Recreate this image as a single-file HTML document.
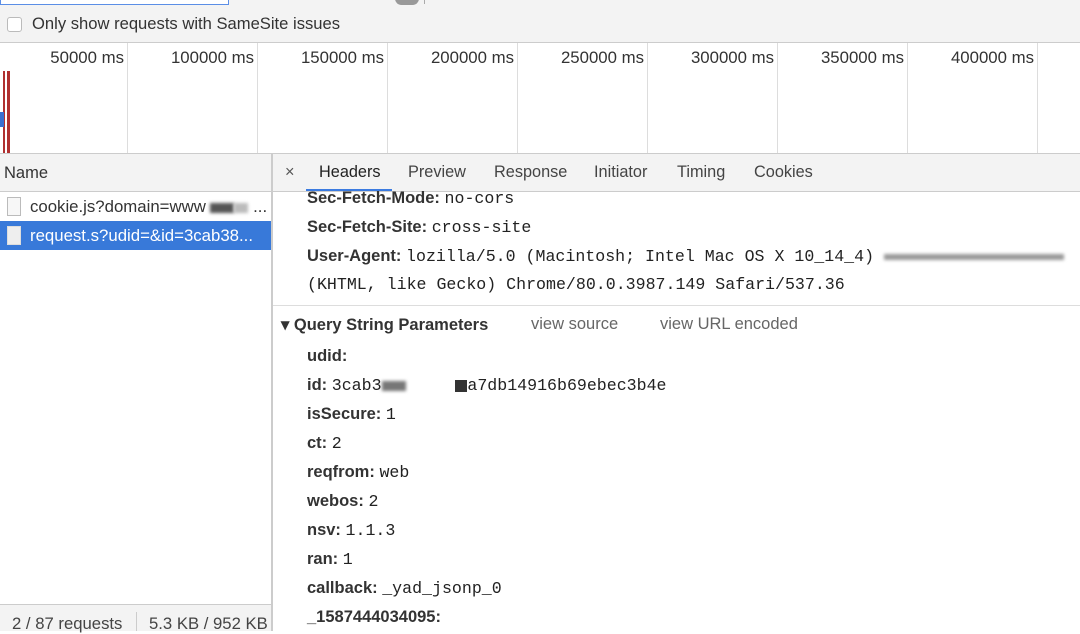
<!DOCTYPE html>
<html><head><meta charset="utf-8"><style>
*{margin:0;padding:0;box-sizing:border-box}
body{width:1080px;height:631px;overflow:hidden;position:relative;background:#fff;font-family:"Liberation Sans",sans-serif;color:#222}
.a{position:absolute}
.lbl{font-weight:bold;color:#333;font-size:16.5px}
.row{position:absolute;left:307px;font-size:16.5px;white-space:nowrap}
.row .v{font-family:"Liberation Mono",monospace;font-size:16.6px;color:#222}
.tick{position:absolute;top:48px;font-size:16.8px;color:#333;text-align:right;width:130px}
.vl{position:absolute;top:43px;width:1px;height:110px;background:#ddd}
.tab{position:absolute;top:163px;font-size:16.3px;color:#444}
.blur{display:inline-block;background:#777;height:10px;vertical-align:middle;filter:blur(1.5px)}
</style></head><body>
<div class="a" style="left:0;top:0;width:1080px;height:42px;background:#f3f3f3"></div>
<div class="a" style="left:0;top:-10px;width:229px;height:15px;border:1px solid #5b8ee6;background:#fff"></div>
<div class="a" style="left:395px;top:-8px;width:24px;height:13px;border-radius:7px;background:#999"></div>
<div class="a" style="left:424px;top:-4px;width:1px;height:8px;background:#aaa"></div>
<div class="a" style="left:7px;top:17px;width:15px;height:15px;border:1px solid #bbb;border-radius:3px;background:#fff"></div>
<div class="a" style="left:32px;top:14px;font-size:16.6px;color:#333">Only show requests with SameSite issues</div>
<div class="a" style="left:0;top:42px;width:1080px;height:1px;background:#ccc"></div>
<div class="vl" style="left:127px"></div><div class="vl" style="left:257px"></div><div class="vl" style="left:387px"></div><div class="vl" style="left:517px"></div><div class="vl" style="left:647px"></div><div class="vl" style="left:777px"></div><div class="vl" style="left:907px"></div><div class="vl" style="left:1037px"></div>
<div class="tick" style="left:-6px">50000 ms</div><div class="tick" style="left:124px">100000 ms</div><div class="tick" style="left:254px">150000 ms</div><div class="tick" style="left:384px">200000 ms</div><div class="tick" style="left:514px">250000 ms</div><div class="tick" style="left:644px">300000 ms</div><div class="tick" style="left:774px">350000 ms</div><div class="tick" style="left:904px">400000 ms</div>
<div class="a" style="left:3px;top:71px;width:2px;height:82px;background:#b03030"></div>
<div class="a" style="left:7px;top:71px;width:3px;height:82px;background:#b03030"></div>
<div class="a" style="left:0;top:112px;width:4px;height:15px;background:#3a6fd0"></div>
<div class="a" style="left:0;top:153px;width:1080px;height:1px;background:#ccc"></div>
<div class="a" style="left:0;top:154px;width:271px;height:38px;background:#f3f3f3;border-bottom:1px solid #ccc"></div>
<div class="a" style="left:4px;top:164px;font-size:16.5px;color:#333">Name</div>
<div class="a" style="left:271px;top:154px;width:2px;height:477px;background:#ccc"></div>
<div class="a" style="left:0;top:221px;width:271px;height:29px;background:#3879d9"></div>
<div class="a" style="left:7px;top:197px;width:14px;height:19px;border:1px solid #bbb;background:#f7f7f7"></div>
<div class="a" style="left:7px;top:226px;width:14px;height:19px;border:1px solid #ddd;background:#eee"></div>
<div class="a" style="left:30px;top:197px;font-size:16.8px;color:#333;white-space:nowrap">cookie.js?domain=www <span class="blur" style="width:24px;background:#555"></span><span class="blur" style="width:14px;background:#bbb"></span> ...</div>
<div class="a" style="left:30px;top:226px;font-size:16.8px;color:#fff;white-space:nowrap">request.s?udid=&amp;id=3cab38...</div>
<div class="a" style="left:0;top:604px;width:271px;height:27px;background:#f3f3f3;border-top:1px solid #ccc"></div>
<div class="a" style="left:12px;top:614px;font-size:16.7px;color:#444;white-space:nowrap">2 / 87 requests</div>
<div class="a" style="left:136px;top:612px;width:1px;height:19px;background:#ccc"></div>
<div class="a" style="left:149px;top:614px;font-size:16.7px;color:#444;white-space:nowrap">5.3 KB / 952 KB</div>
<div class="a" style="left:273px;top:154px;width:807px;height:38px;background:#f3f3f3;border-bottom:1px solid #ccc"></div>
<div class="tab" style="left:285px;color:#555">×</div>
<div class="tab" style="left:319px;color:#222">Headers</div>
<div class="a" style="left:306px;top:189px;width:86px;height:2px;background:#3b7be0"></div>
<div class="tab" style="left:408px">Preview</div>
<div class="tab" style="left:494px">Response</div>
<div class="tab" style="left:594px">Initiator</div>
<div class="tab" style="left:677px">Timing</div>
<div class="tab" style="left:754px">Cookies</div>
<div class="row" style="top:189px"><span class="lbl">Sec-Fetch-Mode:</span> <span class="v">no-cors</span></div>
<div class="row" style="top:218px"><span class="lbl">Sec-Fetch-Site:</span> <span class="v">cross-site</span></div>
<div class="row" style="top:247px"><span class="lbl">User-Agent:</span> <span class="v">lozilla/5.0 (Macintosh; Intel Mac OS X 10_14_4) <span class="blur" style="width:180px;background:#999;height:6px"></span></span></div>
<div class="row" style="top:275px"><span class="v">(KHTML, like Gecko) Chrome/80.0.3987.149 Safari/537.36</span></div>
<div class="a" style="left:273px;top:305px;width:807px;height:1px;background:#ddd"></div>
<div class="a" style="left:281px;top:315px;font-size:16.5px;font-weight:bold;color:#333">▾ Query String Parameters</div>
<div class="a" style="left:531px;top:315px;font-size:16.5px;color:#666">view source</div>
<div class="a" style="left:660px;top:315px;font-size:16.5px;color:#666">view URL encoded</div>
<div class="row" style="top:347px"><span class="lbl">udid:</span></div>
<div class="row" style="top:376px"><span class="lbl">id:</span> <span class="v">3cab3<span class="blur" style="width:24px;background:#777"></span>&nbsp;&nbsp;&nbsp;&nbsp; <span style="display:inline-block;width:12px;height:12px;background:#333;vertical-align:middle"></span>a7db14916b69ebec3b4e</span></div>
<div class="row" style="top:405px"><span class="lbl">isSecure:</span> <span class="v">1</span></div>
<div class="row" style="top:434px"><span class="lbl">ct:</span> <span class="v">2</span></div>
<div class="row" style="top:463px"><span class="lbl">reqfrom:</span> <span class="v">web</span></div>
<div class="row" style="top:492px"><span class="lbl">webos:</span> <span class="v">2</span></div>
<div class="row" style="top:521px"><span class="lbl">nsv:</span> <span class="v">1.1.3</span></div>
<div class="row" style="top:550px"><span class="lbl">ran:</span> <span class="v">1</span></div>
<div class="row" style="top:579px"><span class="lbl">callback:</span> <span class="v">_yad_jsonp_0</span></div>
<div class="row" style="top:608px"><span class="lbl">_1587444034095:</span></div>
</body></html>
